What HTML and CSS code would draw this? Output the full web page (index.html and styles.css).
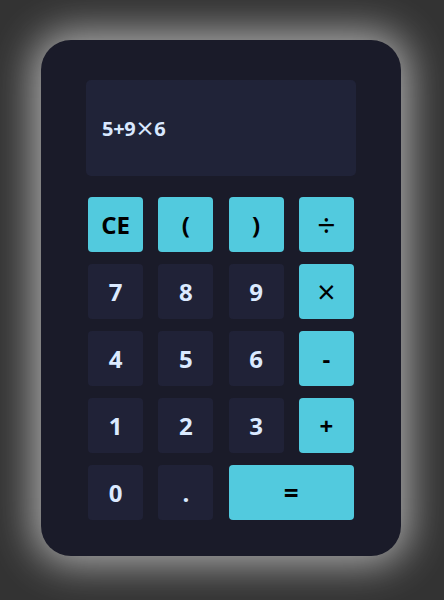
FILE: index.html
```html
<!DOCTYPE html>
<html>
<head>
<meta charset="utf-8">
<link rel="stylesheet" href="styles.css">
</head>
<body>
<div class="calc">
  <div class="display">5+9<span class="mul">×</span>6</div>
  <div class="keys">
    <div class="key op">CE</div>
    <div class="key op">(</div>
    <div class="key op">)</div>
    <div class="key op"><span class="big">÷</span></div>
    <div class="key">7</div>
    <div class="key">8</div>
    <div class="key">9</div>
    <div class="key op"><span class="big">×</span></div>
    <div class="key">4</div>
    <div class="key">5</div>
    <div class="key">6</div>
    <div class="key op">-</div>
    <div class="key">1</div>
    <div class="key">2</div>
    <div class="key">3</div>
    <div class="key op">+</div>
    <div class="key">0</div>
    <div class="key">.</div>
    <div class="key op wide">=</div>
  </div>
</div>
</body>
</html>
```
FILE: styles.css
```css
html, body {
  margin: 0;
  padding: 0;
}
body {
  width: 444px;
  height: 600px;
  background: #333333;
  font-family: "Open Sans", "Noto Sans", sans-serif;
  overflow: hidden;
}
.calc {
  box-sizing: border-box;
  margin: 40px 0 0 41px;
  width: 360px;
  height: 516px;
  background: #1a1b29;
  border-radius: 30px;
  box-shadow: 0 0 40px 8px rgba(255, 255, 255, 0.6);
  padding: 40px 45px 0 45px;
}
.display {
  box-sizing: border-box;
  height: 96px;
  background: #202338;
  border-radius: 5px;
  padding: 0 16px;
  display: flex;
  align-items: center;
  color: #d9e8ff;
  font-size: 20px;
  font-weight: 700;
  letter-spacing: -0.3px;
}
.display .mul {
  font-size: 30px;
  font-weight: 400;
  line-height: 1;
  margin: 0 1px;
}
.keys {
  margin-top: 21px;
  display: grid;
  grid-template-columns: repeat(4, 55px);
  grid-auto-rows: 55px;
  column-gap: 15.3px;
  row-gap: 12px;
  justify-content: center;
}
.key {
  background: #202237;
  border-radius: 4px;
  color: #dbeaff;
  font-size: 24px;
  font-weight: 700;
  display: flex;
  align-items: center;
  justify-content: center;
}
.key.op {
  background: #52cade;
  color: #000000;
}
.key .big {
  font-size: 32px;
  font-weight: 400;
  line-height: 1;
}
.key.wide {
  grid-column: span 2;
  font-size: 26px;
}
```
